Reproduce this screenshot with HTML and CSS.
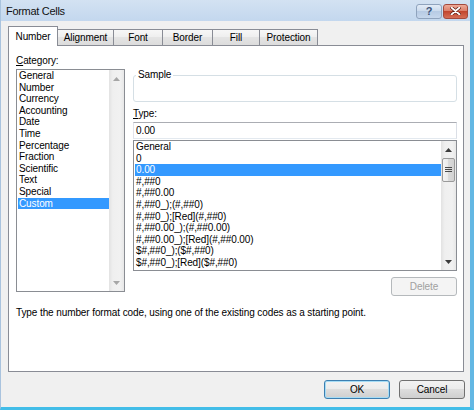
FILE: index.html
```html
<!DOCTYPE html>
<html>
<head>
<meta charset="utf-8">
<link rel="stylesheet" href="styles.css">
</head>
<body>
<div class="window">
  <div class="titlebar">
    <span class="title">Format Cells</span>
    <div class="caption-btns">
      <span class="cap help">?</span>
      <span class="cap close"><svg width="11" height="8" viewBox="0 0 11 8"><path d="M1.5 0.5 L9.5 7.5 M9.5 0.5 L1.5 7.5" stroke="#5a1a10" stroke-width="3.2" stroke-linecap="round"/><path d="M1.5 0.5 L9.5 7.5 M9.5 0.5 L1.5 7.5" stroke="#fff" stroke-width="1.8" stroke-linecap="round"/></svg></span>
    </div>
  </div>
  <div class="client">
    <div class="tabs">
      <div class="tab active w-number">Number</div>
      <div class="tab w-alignment">Alignment</div>
      <div class="tab w-font">Font</div>
      <div class="tab w-border">Border</div>
      <div class="tab w-fill">Fill</div>
      <div class="tab w-protection">Protection</div>
    </div>
    <div class="panel">
      <div class="columns">
        <div class="left">
          <div class="label"><u>C</u>ategory:</div>
          <div class="listbox cat">
            <div class="items">
              <div class="item">General</div>
              <div class="item">Number</div>
              <div class="item">Currency</div>
              <div class="item">Accounting</div>
              <div class="item">Date</div>
              <div class="item">Time</div>
              <div class="item">Percentage</div>
              <div class="item">Fraction</div>
              <div class="item">Scientific</div>
              <div class="item">Text</div>
              <div class="item">Special</div>
              <div class="item selected">Custom</div>
            </div>
            <div class="sb">
              <div class="sb-arrow"><svg width="7" height="4" viewBox="0 0 7 4"><path d="M0 4 L3.5 0 L7 4Z" fill="#a6a6a6"/></svg></div>
              <div class="sb-track"></div>
              <div class="sb-arrow"><svg width="7" height="4" viewBox="0 0 7 4"><path d="M0 0 L3.5 4 L7 0Z" fill="#a6a6a6"/></svg></div>
            </div>
          </div>
        </div>
        <div class="right">
          <fieldset class="sample">
            <legend>Sample</legend>
            <div class="sample-body"></div>
          </fieldset>
          <div class="label type-label"><u>T</u>ype:</div>
          <div class="input">0.00</div>
          <div class="listbox fmt">
            <div class="items">
              <div class="item">General</div>
              <div class="item">0</div>
              <div class="item selected">0.00</div>
              <div class="item">#,##0</div>
              <div class="item">#,##0.00</div>
              <div class="item">#,##0_);(#,##0)</div>
              <div class="item">#,##0_);[Red](#,##0)</div>
              <div class="item">#,##0.00_);(#,##0.00)</div>
              <div class="item">#,##0.00_);[Red](#,##0.00)</div>
              <div class="item">$#,##0_);($#,##0)</div>
              <div class="item">$#,##0_);[Red]($#,##0)</div>
            </div>
            <div class="sb">
              <div class="sb-arrow"><svg width="7" height="4" viewBox="0 0 7 4"><path d="M0 4 L3.5 0 L7 4Z" fill="#3c3c3c"/></svg></div>
              <div class="sb-track">
                <div class="thumb"><svg width="7" height="6" viewBox="0 0 7 6"><path d="M0 0.5 H7 M0 2.5 H7 M0 4.5 H7" stroke="#4a4a4a" stroke-width="1"/></svg></div>
              </div>
              <div class="sb-arrow"><svg width="7" height="4" viewBox="0 0 7 4"><path d="M0 0 L3.5 4 L7 0Z" fill="#3c3c3c"/></svg></div>
            </div>
          </div>
          <div class="delete-row"><button class="btn disabled">Delete</button></div>
        </div>
      </div>
      <p class="desc">Type the number format code, using one of the existing codes as a starting point.</p>
    </div>
    <div class="footer">
      <button class="btn default">OK</button>
      <button class="btn">Cancel</button>
    </div>
  </div>
</div>
</body>
</html>
```
FILE: styles.css
```css
html, body {
  margin: 0;
  padding: 0;
}
body {
  font-family: "Liberation Sans", Arial, sans-serif;
  font-size: 10px;
  letter-spacing: -0.1px;
  color: #000;
  background: #fff;
}
.window {
  width: 474px;
  height: 410px;
  box-sizing: border-box;
  background: #f0f0f0;
  border-left: 1px solid #a9c3de;
  border-right: 4px solid #63b7e3;
  border-bottom: 3px solid #42bde8;
  display: flex;
  flex-direction: column;
}
.titlebar {
  height: 21px;
  flex: none;
  box-sizing: border-box;
  background: linear-gradient(#d3e2f2, #c3d7ee);
  display: flex;
  align-items: center;
  justify-content: space-between;
  padding: 0 2px 0 5px;
}
.title {
  font-size: 11px;
  letter-spacing: -0.3px;
  color: #111;
}
.caption-btns {
  display: flex;
  gap: 1px;
  margin-top: 1px;
}
.cap {
  box-sizing: border-box;
  height: 15px;
  border-radius: 3px;
  display: flex;
  align-items: center;
  justify-content: center;
}
.help {
  width: 26px;
  border: 1px solid #8fa3bd;
  background: linear-gradient(#e3ecf7, #c9d9ec 50%, #b7cbe4 50%, #c6d7ec);
  color: #3d5478;
  font-weight: bold;
  font-size: 11px;
}
.close {
  width: 25px;
  border: 1px solid #a3493d;
  background: linear-gradient(#eeaa98, #d97a66 50%, #c2462f 50%, #d56d55);
}
.client {
  flex: 1;
  padding: 5px 5px 0 7px;
  display: flex;
  flex-direction: column;
}
.tabs {
  display: flex;
  align-items: flex-end;
  height: 19px;
  position: relative;
  z-index: 1;
}
.tab {
  box-sizing: border-box;
  height: 16px;
  border-top: 1px solid #898c95;
  border-right: 1px solid #898c95;
  background: linear-gradient(#f7f7f7, #eeeeee 50%, #e4e4e4 50%, #dcdcdc);
  display: flex;
  align-items: center;
  justify-content: center;
}
.tab.active {
  height: 20px;
  margin-bottom: -1px;
  background: #fff;
  border-left: 1px solid #898c95;
  padding-bottom: 1px;
}
.w-number { width: 50px; }
.w-alignment { width: 56px; }
.w-font { width: 49px; }
.w-border { width: 50px; }
.w-fill { width: 47px; }
.w-protection { width: 58px; }
.panel {
  width: 456px;
  height: 327px;
  box-sizing: border-box;
  border: 1px solid #898c95;
  background: #fff;
  padding: 9px 5px 0 7px;
  display: flex;
  flex-direction: column;
}
.columns {
  display: flex;
  gap: 8px;
}
.left {
  width: 109px;
}
.right {
  width: 324px;
  display: flex;
  flex-direction: column;
}
.label {
  height: 12px;
  line-height: 12px;
}
.listbox {
  display: flex;
  box-sizing: border-box;
  border: 1px solid #8a8d93;
  background: #fff;
}
.items {
  flex: 1;
  padding: 0 0 0 1px;
}
.item {
  height: 11.6px;
  line-height: 11.6px;
  padding-left: 1px;
  white-space: nowrap;
}
.item.selected {
  background: #3399ff;
  color: #fff;
}
.cat {
  margin-top: 2px;
  height: 223px;
}
.sb {
  width: 15px;
  display: flex;
  flex-direction: column;
  background: linear-gradient(90deg, #e2e2e2, #efefef 25%, #f1f1f1 75%, #e7e7e7);
}
.sb-arrow {
  height: 17px;
  flex: none;
  display: flex;
  align-items: center;
  justify-content: center;
}
.sb-track {
  flex: 1;
}
.thumb {
  box-sizing: border-box;
  height: 24px;
  margin: 0 1px;
  border: 1px solid #9a9a9a;
  border-radius: 2px;
  background: linear-gradient(90deg, #f4f4f4, #e9e9e9 50%, #dadada 50%, #d2d2d2);
  display: flex;
  align-items: center;
  justify-content: center;
}
.sample {
  margin: 14px 0 0 0;
  padding: 0;
  min-width: 0;
  border: 1px solid #d5dfe5;
  border-radius: 3px;
}
.sample legend {
  margin-left: 2px;
  padding: 0 2px;
  line-height: 12px;
}
.sample-body {
  height: 20px;
}
.type-label {
  margin-top: 6px;
}
.input {
  margin-top: 2px;
  box-sizing: border-box;
  height: 17px;
  border: 1px solid #abadb3;
  border-left-color: #e2e3ea;
  border-right-color: #dbdfe6;
  border-bottom-color: #e3e9ef;
  line-height: 15px;
  padding-left: 2px;
}
.fmt {
  margin-top: 1px;
  height: 131px;
}
.delete-row {
  display: flex;
  justify-content: flex-end;
  margin-top: 6px;
}
.btn {
  box-sizing: border-box;
  width: 66px;
  height: 19px;
  border: 1px solid #707070;
  border-radius: 3px;
  background: linear-gradient(#f2f2f2, #ebebeb 50%, #dddddd 50%, #cfcfcf);
  font: inherit;
  letter-spacing: inherit;
  color: #000;
  padding: 0;
}
.btn.disabled {
  border-color: #b5b9bc;
  background: #f4f4f4;
  color: #a0a0a0;
}
.btn.default {
  border-color: #3c7fb1;
  box-shadow: inset 0 0 0 1px #a6dcf5;
}
.desc {
  margin: 11px 0 0 0;
  line-height: 12px;
}
.footer {
  display: flex;
  justify-content: flex-end;
  gap: 9px;
  padding-top: 8px;
}
```
